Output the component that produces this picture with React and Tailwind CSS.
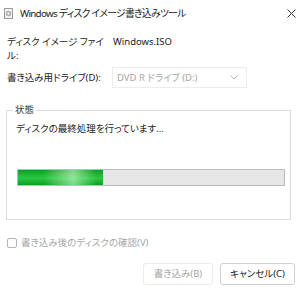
import React from 'react';

const font = "font-['Noto_Sans','Noto_Sans_CJK_JP',sans-serif] [font-feature-settings:'palt']";

const TitleIcon = () => (
  <svg width="9" height="11" viewBox="0 0 9 11">
    <rect x="0.5" y="0.5" width="8" height="10" fill="#f4f4f4" stroke="#9a9a9a" />
    <circle cx="4.5" cy="5.5" r="2.4" fill="#c8c8c8" stroke="#8a8a8a" strokeWidth="0.6" />
    <circle cx="4.5" cy="5.5" r="0.7" fill="#ffffff" />
  </svg>
);

export default function App() {
  return (
    <div className={`w-[300px] h-[295px] bg-white text-[#222] text-[9.5px] leading-[14px] overflow-hidden ${font}`}>
      {/* title bar */}
      <div className="h-[27px] flex items-center pl-[4px] pr-[4px]">
        <TitleIcon />
        <span className="ml-[7px] text-[9.8px] tracking-[-0.7px]">Windows ディスク イメージ書き込みツール</span>
        <svg className="ml-auto" width="9" height="9" viewBox="0 0 9 9">
          <path d="M0.5 0.5 L8.5 8.5 M8.5 0.5 L0.5 8.5" stroke="#333" strokeWidth="1" />
        </svg>
      </div>

      <div className="px-[7px]">
        {/* image file */}
        <div className="mt-[8px] grid grid-cols-[106px_1fr]">
          <div>ディスク イメージ ファイ<br />ル:</div>
          <div>Windows.ISO</div>
        </div>

        {/* drive */}
        <div className="mt-[4px] grid grid-cols-[105px_1fr] items-center">
          <div className="whitespace-nowrap">書き込み用ドライブ(D):</div>
          <div className="w-[135px] h-[21px] border border-[#ececec] flex items-center pl-[4px] pr-[8px] text-[#a6a6a6]">
            <span>DVD R ドライブ (D:)</span>
            <svg className="ml-auto" width="8" height="5" viewBox="0 0 8 5">
              <path d="M0.5 0.5 L4 4 L7.5 0.5" fill="none" stroke="#b8b8b8" strokeWidth="1" />
            </svg>
          </div>
        </div>

        {/* status group */}
        <fieldset className="mt-[15px] -ml-px w-[285px] h-[117px] border border-[#dcdcdc] px-0 pb-0">
          <legend className="ml-[6px] px-[2px] text-[#3a3a3a]">状態</legend>
          <div className="pl-[9px] mt-[5px]">ディスクの最終処理を行っています...</div>
          <div className="ml-[10px] mt-[33px] w-[268px] h-[17px] bg-[#e6e6e6] border border-[#bcbcbc]">
            <div className="h-full w-[85px] bg-[linear-gradient(to_right,rgba(255,255,255,0)_30%,rgba(200,255,205,0.6)_65%,rgba(255,255,255,0)_92%),linear-gradient(to_bottom,#0e9e22,#27c03d_45%,#2cc543_55%,#0e9e22)]" />
          </div>
        </fieldset>

        {/* verify checkbox */}
        <div className="mt-[16px] flex items-center text-[#a6a6a6]">
          <div className="w-[10px] h-[10px] border border-[#b4b4b4] rounded-[2px]" />
          <span className="ml-[4px]">書き込み後のディスクの確認(V)</span>
        </div>

        {/* buttons */}
        <div className="mt-[13px] flex justify-end gap-[7px] -mr-[2px]">
          <div className="w-[70px] h-[22px] border border-[#ececec] rounded-[3px] flex items-center justify-center text-[#a6a6a6]">
            書き込み(B)
          </div>
          <div className="w-[75px] h-[22px] border border-[#d0d0d0] rounded-[3px] flex items-center justify-center">
            キャンセル(C)
          </div>
        </div>
      </div>
    </div>
  );
}
